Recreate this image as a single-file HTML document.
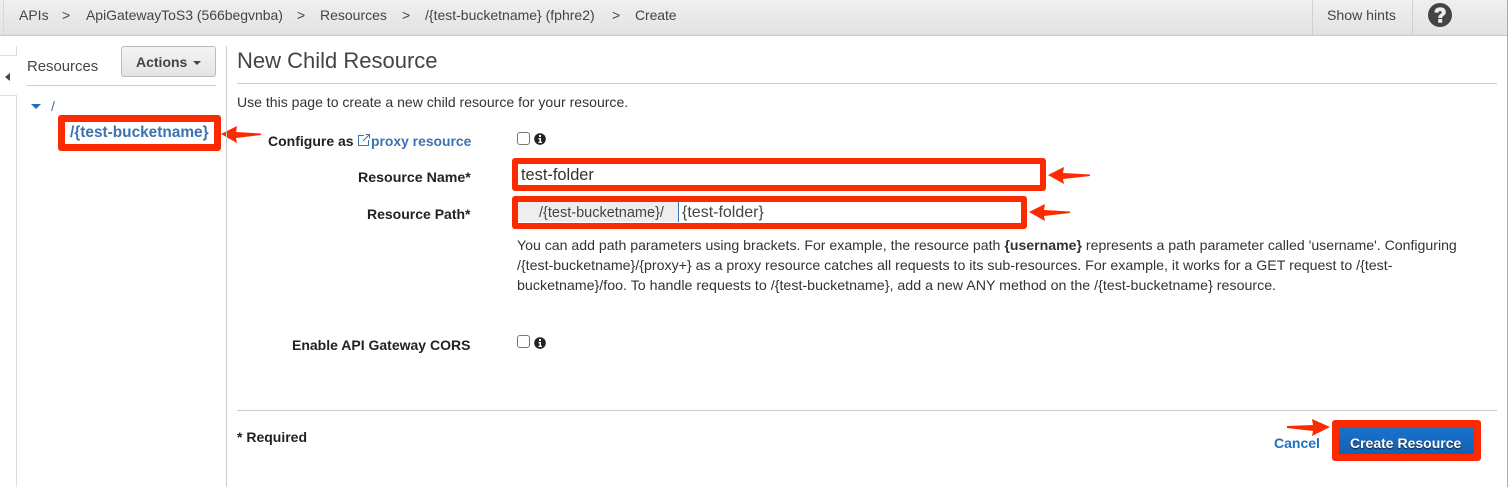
<!DOCTYPE html>
<html><head><meta charset="utf-8">
<style>
html,body{margin:0;padding:0;background:#fff}
#p{position:relative;width:1508px;height:487px;overflow:hidden;background:#fff;font-family:"Liberation Sans",sans-serif;color:#444;font-size:14px}
.t{position:absolute;white-space:nowrap;line-height:18px}
.a{position:absolute}
.b{font-weight:700;color:#222}
.r{position:absolute;border:solid #fc2a00;border-radius:3px;box-sizing:border-box}
</style></head><body><div id="p">
<div class="a" style="left:0;top:0;width:1508px;height:36px;box-sizing:border-box;background:linear-gradient(#f0f0f0,#e2e2e2);border-bottom:1px solid #c8c8c8"></div>
<div class="a" style="left:3px;top:0;width:1px;height:35px;background:#d8d8d8"></div>
<div class="a" style="left:1312px;top:0;width:1px;height:35px;background:#d0d0d0"></div>
<div class="a" style="left:1412px;top:0;width:1px;height:35px;background:#d0d0d0"></div>
<div class="t" style="left:19px;top:6px;font-size:14px">APIs</div>
<div class="t" style="left:62px;top:6px;font-size:14px">&gt;</div>
<div class="t" style="left:86px;top:6px;font-size:14px;letter-spacing:-.03px">ApiGatewayToS3 (566begvnba)</div>
<div class="t" style="left:297px;top:6px;font-size:14px">&gt;</div>
<div class="t" style="left:320px;top:6px;font-size:14px">Resources</div>
<div class="t" style="left:402px;top:6px;font-size:14px">&gt;</div>
<div class="t" style="left:425px;top:6px;font-size:14px">/{test-bucketname} (fphre2)</div>
<div class="t" style="left:612px;top:6px;font-size:14px">&gt;</div>
<div class="t" style="left:635px;top:6px;font-size:14px;letter-spacing:-.1px">Create</div>
<div class="t" style="left:1327px;top:6px;font-size:14.100px">Show hints</div>
<svg class="a" style="left:1428px;top:3px" width="24" height="24" viewBox="0 0 24 24"><circle cx="12" cy="12" r="12" fill="#444"/><path d="M6.500 9.500C6.500 6 9 4.300 12.200 4.300C15.500 4.300 17.800 6.200 17.800 9C17.800 11 16.600 12 15.400 12.900C14.500 13.600 14.200 14 14.200 15H10.200C10.200 13.200 10.800 12.200 12.200 11.200C13.200 10.500 13.700 10 13.700 9.200C13.700 8.500 13.100 8 12.200 8C11.200 8 10.600 8.600 10.500 9.700z" fill="#eee"/><rect x="10.200" y="16" width="4" height="3.700" fill="#eee"/></svg>

<div class="a" style="left:0;top:55px;width:17px;height:1px;background:#ddd"></div>
<div class="a" style="left:16px;top:46px;width:1px;height:10px;background:#ddd"></div>
<div class="a" style="left:16px;top:95px;width:1px;height:392px;background:#ddd"></div>
<div class="a" style="left:0;top:95px;width:17px;height:1px;background:#ddd"></div>
<div class="a" style="left:5px;top:73px;width:0;height:0;border:4px solid transparent;border-right:5px solid #444;border-left:0"></div>
<div class="t" style="left:27px;top:58px;font-size:14.900px">Resources</div>
<div class="a" style="left:121px;top:46px;width:95px;height:31px;box-sizing:border-box;border:1px solid #bbb;border-radius:3px;background:linear-gradient(#f4f4f4,#e4e4e4)"></div>
<div class="t" style="left:136px;top:53px;font-size:14px;font-weight:700">Actions</div>
<div class="a" style="left:193px;top:61px;width:0;height:0;border:4px solid transparent;border-top:4px solid #444;border-bottom:0"></div>
<div class="a" style="left:27px;top:85px;width:189px;height:1px;background:#ccc"></div>
<div class="a" style="left:31px;top:104px;width:0;height:0;border:5px solid transparent;border-top:5px solid #1f6fc0;border-bottom:0"></div>
<div class="t" style="left:51px;top:97px;color:#3b73af">/</div>
<div class="r" style="left:58px;top:115px;width:163px;height:36px;border-width:7px"></div>
<div class="t" style="left:70px;top:124px;font-weight:700;color:#3b73af;font-size:15.400px">/{test-bucketname}</div>
<svg class="a" style="left:220px;top:124px" width="44" height="20"><path d="M1 10 17 2 16 8 41 9.500 41 11 16 14 17 19z" fill="#fc2a00"/></svg>
<div class="a" style="left:226px;top:46px;width:1px;height:441px;background:#ccc"></div>

<div class="t" style="left:237px;top:47px;font-size:22px;line-height:28px">New Child Resource</div>
<div class="a" style="left:237px;top:83px;width:1260px;height:1px;background:#ccc"></div>
<div class="t" style="left:237px;top:93px;font-size:14.050px;color:#333">Use this page to create a new child resource for your resource.</div>

<div class="t b" style="left:268px;top:132px">Configure as</div>
<svg class="a" style="left:357px;top:133px" width="14" height="14" fill="none" stroke="#3b73af" stroke-width="1"><path d="M7 2.500H1.500V12.500H11.500V7M6 8 12.500 1.500M8.500 1.500H12.500V5.500"/></svg>
<div class="t" style="left:371px;top:132px;font-weight:700;color:#3b73af;font-size:13.900px">proxy resource</div>
<div class="a" style="left:517px;top:132px;width:13px;height:13px;box-sizing:border-box;border:1px solid #777;border-radius:3px;background:#fff"></div>
<svg class="a" style="left:534px;top:133px" width="12" height="12" viewBox="0 0 12 12"><circle cx="6" cy="6" r="5.800" fill="#222"/><rect x="5" y="2" width="2" height="2" fill="#fff"/><path d="M4.500 5H7V8.800H8V10H4.500V8.800H5.500V6.200H4.500z" fill="#fff"/></svg>

<div class="t b" style="left:358px;top:169px;font-size:14.200px">Resource Name*</div>
<div class="r" style="left:512px;top:158px;width:534px;height:33px;border-width:6px"></div>
<div class="t" style="left:521px;top:166px;font-size:16.400px;color:#333">test-folder</div>
<svg class="a" style="left:1047px;top:165px" width="44" height="20"><path d="M1 10 17 2 16 8 43 9.500 43 11 16 14 17 19z" fill="#fc2a00"/></svg>

<div class="t b" style="left:367px;top:205px">Resource Path*</div>
<div class="a" style="left:518px;top:202px;width:161px;height:20px;background:#eee"></div>
<div class="a" style="left:678px;top:202px;width:1px;height:20px;background:#3b73af"></div>
<div class="r" style="left:512px;top:196px;width:515px;height:33px;border-width:6px"></div>
<div class="t" style="left:539px;top:204px;font-size:14.500px;color:#444">/{test-bucketname}/</div>
<div class="t" style="left:682px;top:204px;font-size:16px;color:#444">{test-folder}</div>
<svg class="a" style="left:1028px;top:202px" width="44" height="20"><path d="M1 10 17 2 16 8 42 9.500 42 11 16 14 17 19z" fill="#fc2a00"/></svg>

<div class="t" style="left:517px;top:236px;line-height:18px;font-size:14.120px;color:#333">You can add path parameters using brackets. For example, the resource path <b>{username}</b> represents a path parameter called 'username'. Configuring</div>
<div class="t" style="left:517px;top:257px;line-height:18px;font-size:14.190px;color:#333">/{test-bucketname}/{proxy+} as a proxy resource catches all requests to its sub-resources. For example, it works for a GET request to /{test-</div>
<div class="t" style="left:517px;top:277px;line-height:18px;font-size:14.240px;color:#333">bucketname}/foo. To handle requests to /{test-bucketname}, add a new ANY method on the /{test-bucketname} resource.</div>

<div class="t b" style="left:292px;top:336px">Enable API Gateway CORS</div>
<div class="a" style="left:517px;top:335px;width:13px;height:13px;box-sizing:border-box;border:1px solid #777;border-radius:3px;background:#fff"></div>
<svg class="a" style="left:534px;top:337px" width="12" height="12" viewBox="0 0 12 12"><circle cx="6" cy="6" r="5.800" fill="#222"/><rect x="5" y="2" width="2" height="2" fill="#fff"/><path d="M4.500 5H7V8.800H8V10H4.500V8.800H5.500V6.200H4.500z" fill="#fff"/></svg>

<div class="a" style="left:237px;top:410px;width:1260px;height:1px;background:#ccc"></div>
<div class="t b" style="left:237px;top:428px">* Required</div>
<div class="t" style="left:1274px;top:434px;font-weight:700;color:#1f6fc0">Cancel</div>
<svg class="a" style="left:1286px;top:418px" width="44" height="20"><path d="M44 9 26 1 27 7 1 8 1 10 27 13 26 18z" fill="#fc2a00"/></svg>
<div class="a" style="left:1339px;top:427px;width:136px;height:28px;background:linear-gradient(#1a72ce,#1460b0)"></div>
<div class="r" style="left:1332px;top:420px;width:149px;height:41px;border-width:7px"></div>
<div class="t" style="left:1350px;top:434px;font-weight:700;color:#fff;text-shadow:0 1px 1px #123">Create Resource</div>
<div class="a" style="left:1507px;top:0;width:1px;height:487px;background:#aaa"></div>
</div></body></html>
